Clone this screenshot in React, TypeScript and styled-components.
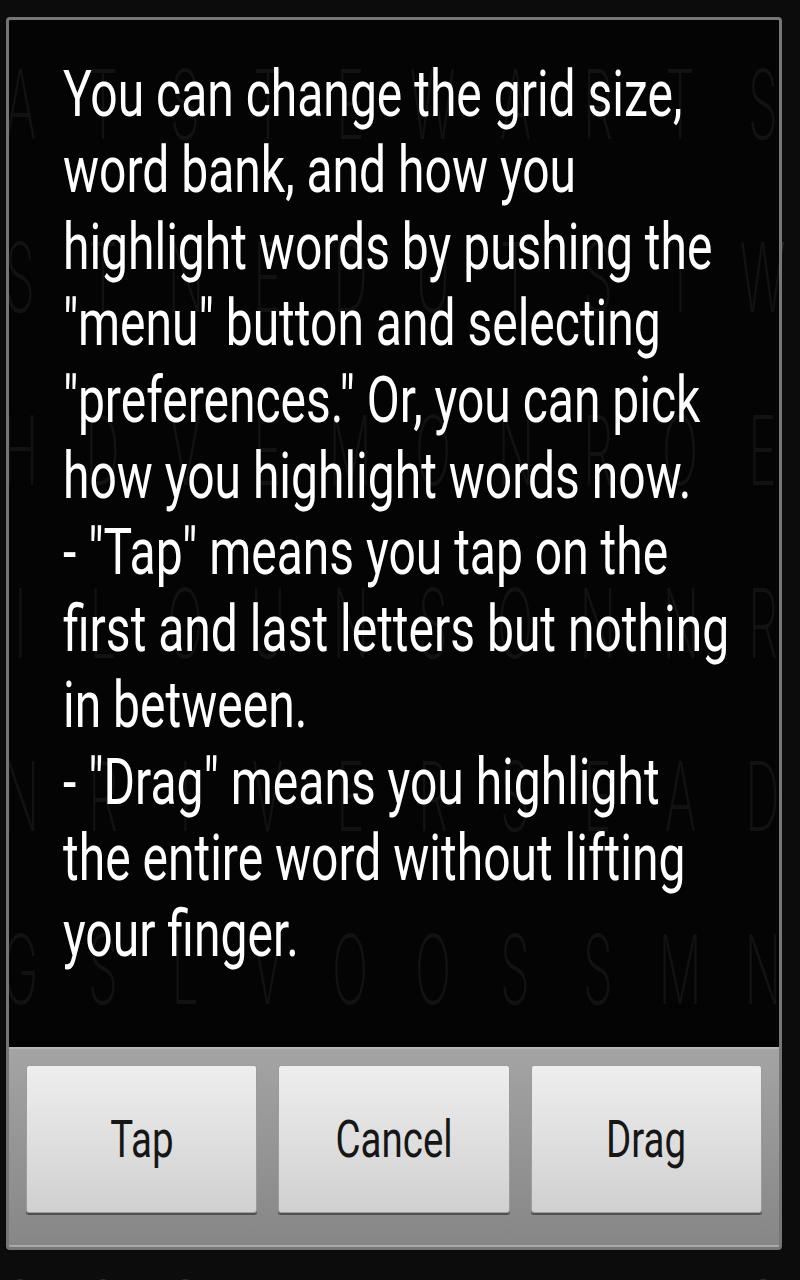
import React from "react";
import styled, { createGlobalStyle } from "styled-components";

const board = [
  "ATSTEWARTS",
  "STNEDUTSIW",
  "HDVEMONROE",
  "ILOUNSONNR",
  "NRIVERSEAD",
  "GSLVOOSSMN",
  "RAEBLACKTO",
  "OOSILILITS",
];

const message = [
  "You can change the grid size,",
  "word bank, and how you",
  "highlight words by pushing the",
  "\"menu\" button and selecting",
  "\"preferences.\" Or, you can pick",
  "how you highlight words now.",
  "- \"Tap\" means you tap on the",
  "first and last letters but nothing",
  "in between.",
  "- \"Drag\" means you highlight",
  "the entire word without lifting",
  "your finger.",
];

const App = () => {
  return (
    <Screen>
      <GlobalStyle />
      <Board aria-hidden="true">
        {board.map((row, r) =>
          row.split("").map((ch, c) => (
            <Cell key={`${r}-${c}`}>
              <Letter>{ch}</Letter>
            </Cell>
          ))
        )}
      </Board>

      <Dialog>
        <Body>
          <Message>
            {message.map((line, i) => (
              <Line key={i}>{line}</Line>
            ))}
          </Message>
        </Body>
        <ButtonBar>
          <Button>
            <Label>Tap</Label>
          </Button>
          <Button>
            <Label>Cancel</Label>
          </Button>
          <Button>
            <Label>Drag</Label>
          </Button>
        </ButtonBar>
      </Dialog>
    </Screen>
  );
};

export default App;

// ===== Styled Components ===== //

const GlobalStyle = createGlobalStyle`
  html, body {
    margin: 0;
    padding: 0;
    background: #0c0c0c;
    overflow: hidden;
  }
`;

const Screen = styled.div`
  position: relative;
  width: 800px;
  height: 1280px;
  overflow: hidden;
  background: #0c0c0c;
`;

const Board = styled.div`
  display: grid;
  grid-template-columns: repeat(10, 82.5px);
  grid-auto-rows: 173px;
  padding-top: 17px;
  margin-left: -21px;
`;

const Cell = styled.div`
  display: flex;
  align-items: center;
  justify-content: center;
`;

const Letter = styled.span`
  display: inline-block;
  font-family: Inter, "Open Sans", sans-serif;
  font-weight: 200;
  font-size: 96px;
  line-height: 1;
  color: #2e2e2e;
  transform: scaleX(0.5);
`;

const Dialog = styled.div`
  position: absolute;
  left: 6px;
  top: 17px;
  width: 776px;
  height: 1233px;
  box-sizing: border-box;
  border: 3px solid #767676;
  border-radius: 4px;
  display: flex;
  flex-direction: column;
  background: rgba(0, 0, 0, 0.6);
  overflow: hidden;
`;

const Body = styled.div`
  flex: 1;
  padding: 37px 0 0 54px;
`;

const Message = styled.div`
  font-family: Roboto, "Noto Sans", sans-serif;
  font-size: 64px;
  line-height: 76.4px;
  color: #ffffff;
  white-space: nowrap;
  transform: scaleX(0.75);
  transform-origin: left top;
`;

const Line = styled.div``;

const ButtonBar = styled.div`
  height: 200px;
  box-sizing: border-box;
  border-top: 2px solid #b8b8b8;
  background: linear-gradient(#a4a4a4, #868686);
  box-shadow: inset 0 -2px 0 #a9a9a9;
  padding: 16px 17px 0;
  display: grid;
  grid-template-columns: repeat(3, 1fr);
  gap: 21px;
  align-items: start;
`;

const Button = styled.div`
  height: 148px;
  box-sizing: border-box;
  border-radius: 3px;
  border: 1px solid #9c9c9c;
  background: linear-gradient(#eeeeee, #d0d0d0);
  box-shadow: 0 2px 0 #505050;
  display: flex;
  align-items: center;
  justify-content: center;
`;

const Label = styled.span`
  display: inline-block;
  font-family: Roboto, "Noto Sans", sans-serif;
  font-size: 52px;
  color: #161616;
  transform: scaleX(0.74);
`;
